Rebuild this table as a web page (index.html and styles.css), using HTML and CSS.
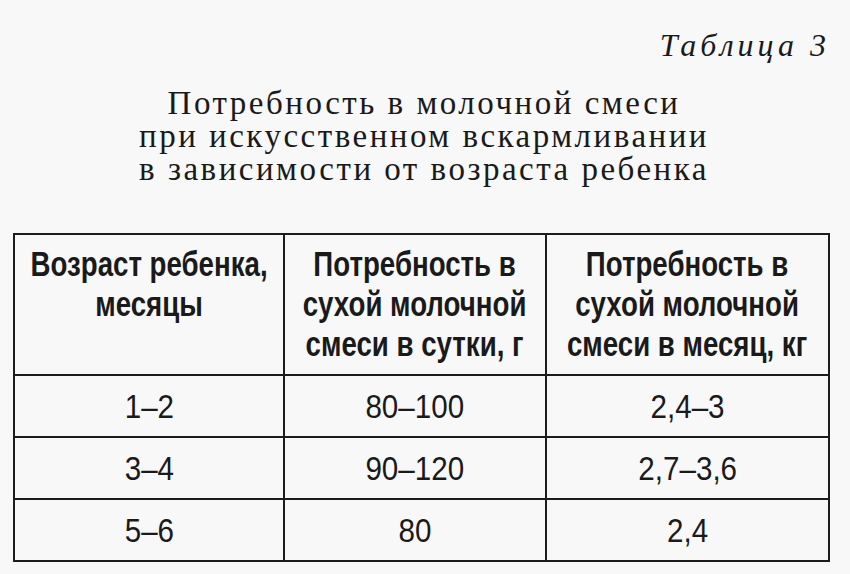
FILE: index.html
```html
<!DOCTYPE html>
<html lang="ru">
<head>
<meta charset="utf-8">
<link rel="stylesheet" href="styles.css">
</head>
<body>
<div class="page">
  <div class="caption">Таблица 3</div>
  <h1 class="title">
    <span class="tline">Потребность в молочной смеси</span>
    <span class="tline">при искусственном вскармливании</span>
    <span class="tline">в зависимости от возраста ребенка</span>
  </h1>
  <table class="grid">
    <thead>
      <tr>
        <th class="c1"><div class="hwrap"><span class="hd">Возраст ребенка,<br>месяцы</span></div></th>
        <th class="c2"><div class="hwrap"><span class="hd">Потребность в<br>сухой молочной<br>смеси в сутки, г</span></div></th>
        <th class="c3"><div class="hwrap"><span class="hd">Потребность в<br>сухой молочной<br>смеси в месяц, кг</span></div></th>
      </tr>
    </thead>
    <tbody>
      <tr><td><span class="num">1–2</span></td><td><span class="num">80–100</span></td><td><span class="num">2,4–3</span></td></tr>
      <tr><td><span class="num">3–4</span></td><td><span class="num">90–120</span></td><td><span class="num">2,7–3,6</span></td></tr>
      <tr><td><span class="num">5–6</span></td><td><span class="num">80</span></td><td><span class="num">2,4</span></td></tr>
    </tbody>
  </table>
</div>
</body>
</html>
```
FILE: styles.css
```css
html, body {
  margin: 0;
  padding: 0;
  background: #f8f8f8;
}
.page {
  width: 850px;
  height: 574px;
  box-sizing: border-box;
  padding: 27px 20px 0 13px;
  color: #1a1a1a;
}
.caption {
  font-family: "Liberation Serif", serif;
  font-style: italic;
  font-size: 32px;
  letter-spacing: 4px;
  text-align: right;
  line-height: 36px;
}
.title {
  margin: 24px 0 0 0;
  padding-left: 5px;
  font-family: "Liberation Serif", serif;
  font-weight: normal;
  font-size: 33px;
  line-height: 33px;
  text-align: center;
  letter-spacing: 2.5px;
}
.tline {
  display: block;
}
.grid {
  margin-top: 47px;
  width: 817px;
  border-collapse: collapse;
  table-layout: fixed;
}
.grid th, .grid td {
  border: 2px solid #1c1c1c;
  text-align: center;
  padding: 0;
}
.c1 { width: 270px; }
.c2 { width: 262px; }
.c3 { width: 283px; }
.grid th {
  height: 141px;
  vertical-align: top;
  padding-top: 9px;
  box-sizing: border-box;
}
.hwrap {
  display: flex;
  justify-content: center;
}
.hd {
  display: block;
  flex: none;
  text-align: center;
  font-family: "Liberation Sans", sans-serif;
  font-weight: bold;
  font-size: 35px;
  line-height: 40px;
  transform: scaleX(0.79);
  white-space: nowrap;
}
.grid td {
  height: 60px;
}
.num {
  display: inline-block;
  font-family: "Liberation Sans", sans-serif;
  font-size: 34px;
  transform: scaleX(0.87);
}
```
